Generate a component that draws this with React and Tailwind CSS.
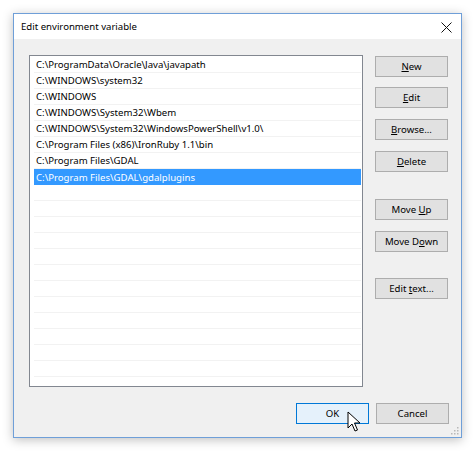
import React from 'react';

const paths = [
  'C:\\ProgramData\\Oracle\\Java\\javapath',
  'C:\\WINDOWS\\system32',
  'C:\\WINDOWS',
  'C:\\WINDOWS\\System32\\Wbem',
  'C:\\WINDOWS\\System32\\WindowsPowerShell\\v1.0\\',
  'C:\\Program Files (x86)\\IronRuby 1.1\\bin',
  'C:\\Program Files\\GDAL',
  'C:\\Program Files\\GDAL\\gdalplugins',
];

const font = { fontFamily: '"Noto Sans", "Open Sans", sans-serif' };

function Btn({ children, className = '', primary }) {
  return (
    <button
      className={`w-[73px] h-[21px] text-[9.6px] leading-none text-black border ${
        primary ? 'bg-[#e5f1fb] border-[#0078d7]' : 'bg-[#e1e1e1] border-[#adadad]'
      } ${className}`}
    >
      {children}
    </button>
  );
}

function Cursor() {
  return (
    <svg className="absolute left-[347px] top-[411px]" width="14" height="22" viewBox="0 0 14 22">
      <path d="M1 1 L1 17 L5 13 L8 20 L10.5 19 L7.5 12 L13 12 Z" fill="white" stroke="black" strokeWidth="1" strokeLinejoin="round" />
    </svg>
  );
}

export default function App() {
  const rows = [...paths, '', '', '', '', '', '', '', '', '', '', '', '', ''];
  return (
    <div className="relative w-[474px] h-[451px] bg-white pl-[13px] pt-[13px]" style={font}>
      {/* Window */}
      <div className="w-[449px] h-[425px] border border-[#6f9fd8] shadow-[0_2px_10px_rgba(0,0,0,0.25)] flex flex-col">
        <div className="h-[25px] bg-white flex items-center justify-between pl-[7px] pr-[9px] pt-[1px]">
          <span className="text-[9.6px] text-black">Edit environment variable</span>
          <svg width="11" height="11" viewBox="0 0 11 11">
            <path d="M0.5 0.5 L10.5 10.5 M10.5 0.5 L0.5 10.5" stroke="#111" strokeWidth="1" />
          </svg>
        </div>
        <div className="flex-1 bg-[#f0f0f0] relative pl-[15px] pt-[16px]">
          <div className="flex gap-[12px]">
            {/* List */}
            <div className="w-[334px] h-[332px] bg-white border border-[#828790] pl-[4px] pr-[1px] pt-[1px] overflow-hidden">
              {rows.map((p, i) => {
                const sel = i === 7;
                return (
                  <div
                    key={i}
                    className={`h-[16px] px-[2px] pt-[1px] flex items-center text-[9.6px] leading-none whitespace-nowrap ${
                      sel ? 'bg-[#3399ff] text-white' : 'text-black border-b border-[#f2f2f2]'
                    }`}
                  >
                    {p}
                  </div>
                );
              })}
            </div>
            {/* Buttons */}
            <div className="flex flex-col pt-[1px]">
              <Btn><u>N</u>ew</Btn>
              <Btn className="mt-[10px]"><u>E</u>dit</Btn>
              <Btn className="mt-[11px]"><u>B</u>rowse...</Btn>
              <Btn className="mt-[11px]"><u>D</u>elete</Btn>
              <Btn className="mt-[27px]">Move <u>U</u>p</Btn>
              <Btn className="mt-[11px]">Move D<u>o</u>wn</Btn>
              <Btn className="mt-[26px]">Edit <u>t</u>ext...</Btn>
            </div>
          </div>
          <div className="flex justify-end gap-[7px] mt-[16px] pr-[12px]">
            <Btn primary>OK</Btn>
            <Btn>Cancel</Btn>
          </div>
          {/* Resize grip */}
          <svg className="absolute right-[2px] bottom-[2px]" width="8" height="8" viewBox="0 0 8 8">
            <rect x="6" y="0" width="1.5" height="1.5" fill="#b8b8b8" />
            <rect x="3" y="3" width="1.5" height="1.5" fill="#b8b8b8" />
            <rect x="6" y="3" width="1.5" height="1.5" fill="#b8b8b8" />
            <rect x="0" y="6" width="1.5" height="1.5" fill="#b8b8b8" />
            <rect x="3" y="6" width="1.5" height="1.5" fill="#b8b8b8" />
            <rect x="6" y="6" width="1.5" height="1.5" fill="#b8b8b8" />
          </svg>
        </div>
      </div>
      <Cursor />
    </div>
  );
}
